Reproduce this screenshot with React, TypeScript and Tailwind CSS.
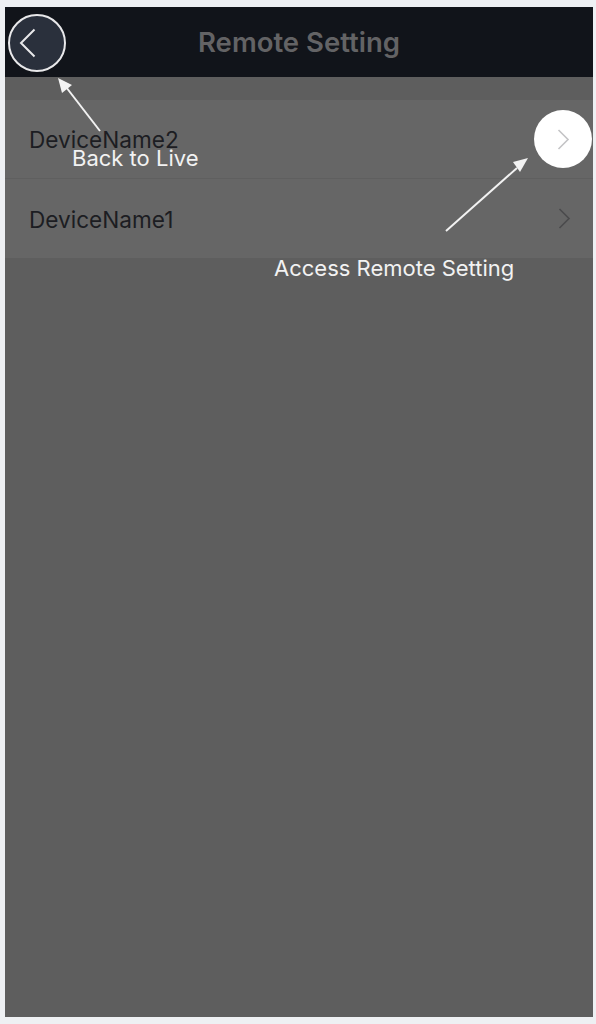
const font = "font-['Inter',sans-serif]";

const devices = ['DeviceName2', 'DeviceName1'];

function Chevron({ className }: { className: string }) {
  return (
    <svg width="13" height="21" viewBox="0 0 13 21" fill="none" className={className}>
      <path d="M1.5 1 L11 10.5 L1.5 20" stroke="currentColor" strokeWidth="1.6" />
    </svg>
  );
}

export default function App() {
  return (
    <div className={`relative h-[1024px] w-[596px] overflow-hidden bg-[#eef0f3] pb-[7px] pl-[5px] pr-[3px] pt-[7px] ${font}`}>
      <div className="flex h-full flex-col bg-[#5e5e5e]">
        <header className="flex h-[70px] shrink-0 items-center justify-center bg-[#11141a] pt-[2px]">
          <h1 className="text-[27.5px] font-semibold text-[#636365]">Remote Setting</h1>
        </header>

        <div className="mt-[23px] flex flex-col">
          {devices.map((name, i) => (
            <div
              key={name}
              className={`flex h-[79px] items-center justify-between bg-[#666666] pl-6 pr-[22px] ${i === 0 ? 'border-b border-[#5f5f5f]' : ''}`}
            >
              <span className="pt-[2px] text-[22.6px] text-[#1c1d22]">{name}</span>
              <Chevron className="text-[#4a4a4c]" />
            </div>
          ))}
        </div>
      </div>

      {/* annotations over the dimmed screen */}
      <div className="absolute left-[8px] top-[14px] flex h-[58px] w-[58px] items-center justify-center rounded-full border-2 border-[#e8e8ea] bg-[#2a303c] pr-[19px]">
        <svg width="17" height="30" viewBox="0 0 17 30" fill="none">
          <path d="M15.5 1.5 L2 15 L15.5 28.5" stroke="#e8e8ea" strokeWidth="2" />
        </svg>
      </div>

      <div className="absolute left-[534px] top-[110px] flex h-[58px] w-[58px] items-center justify-center rounded-full bg-white pl-[1px]">
        <Chevron className="text-[#c4c4c6]" />
      </div>

      <svg width="596" height="300" viewBox="0 0 596 300" fill="none" className="absolute left-0 top-0">
        <path d="M100 131 L66 87" stroke="#f2f2f2" strokeWidth="2" />
        <path d="M58 78 L72 85 L62 93 Z" fill="#f2f2f2" />
        <path d="M446 231 L517 168" stroke="#f2f2f2" strokeWidth="2" />
        <path d="M528 158 L520 172 L513 162 Z" fill="#f2f2f2" />
      </svg>

      <span className="absolute left-[72px] top-[144px] text-[22px] leading-[28px] text-[#f2f2f2]">Back to Live</span>
      <span className="absolute left-[274px] top-[254px] text-[22px] leading-[28px] text-[#f2f2f2]">Access Remote Setting</span>
    </div>
  );
}
